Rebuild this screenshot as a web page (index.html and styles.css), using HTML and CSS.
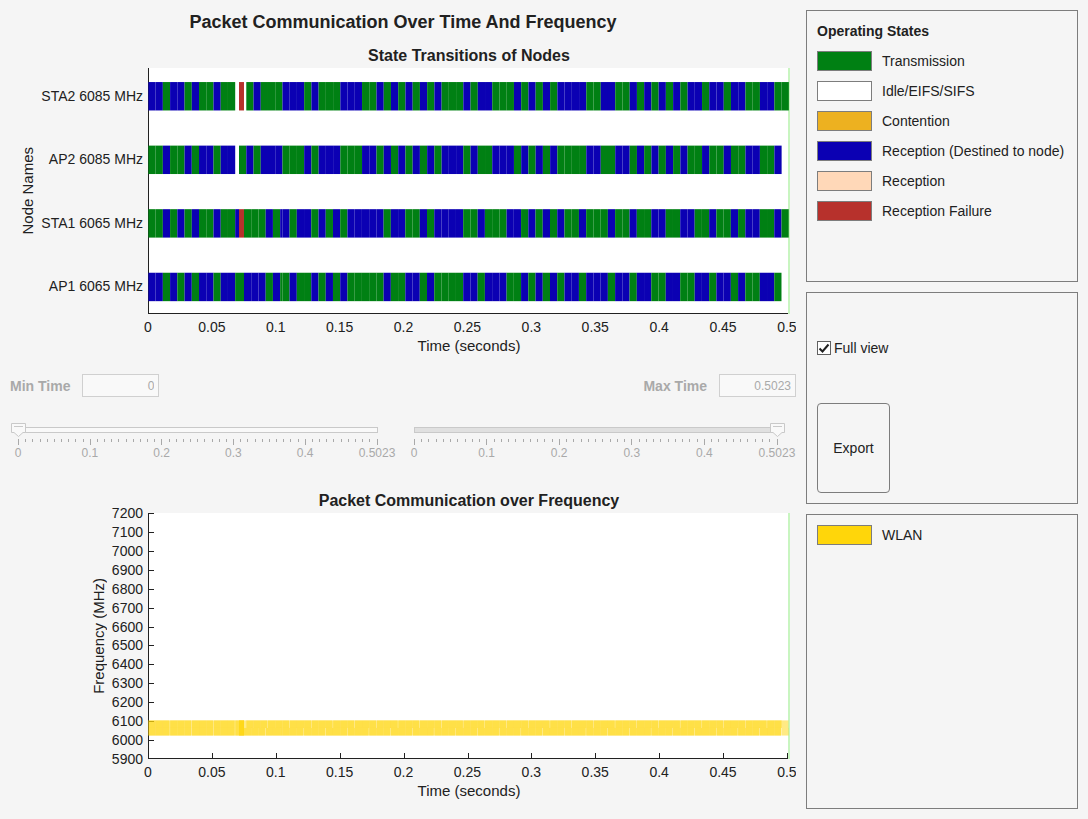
FILE: index.html
```
<!DOCTYPE html>
<html lang="en">
<head>
    <meta charset="UTF-8">
    <title>Packet Communication Over Time And Frequency</title>
    <link rel="stylesheet" href="styles.css">
</head>
<body>
    <main class="plots">
        <h1>Packet Communication Over Time And Frequency</h1>

        <section class="chart">
            <h2>State Transitions of Nodes</h2>
            <div class="y-axis">
                <span class="y-title">Node Names</span>
                <div class="y-labels nodes">
                    <span>STA2 6085 MHz</span>
                    <span>AP2 6085 MHz</span>
                    <span>STA1 6065 MHz</span>
                    <span>AP1 6065 MHz</span>
                </div>
            </div>
            <svg class="canvas" id="state-plot"></svg>
            <div class="x-labels" id="state-labels"></div>
            <div class="x-title">Time (seconds)</div>
        </section>

        <div class="limits">
            <label for="min-time">Min Time</label>
            <input class="limit" id="min-time" type="text" value="0" disabled>
            <label class="max-label" for="max-time">Max Time</label>
            <input class="limit" id="max-time" type="text" value="0.5023" disabled>
        </div>

        <div class="sliders">
            <div class="slider">
                <div class="track">
                    <input type="range" min="0" max="0.5023" step="0.0001" value="0" aria-label="Min time" disabled>
                </div>
                <svg class="ticks"></svg>
                <div class="slider-labels"><span>0</span><span>0.1</span><span>0.2</span><span>0.3</span><span>0.4</span><span>0.5023</span></div>
            </div>
            <div class="slider">
                <div class="track filled">
                    <input type="range" min="0" max="0.5023" step="0.0001" value="0.5023" aria-label="Max time" disabled>
                </div>
                <svg class="ticks"></svg>
                <div class="slider-labels"><span>0</span><span>0.1</span><span>0.2</span><span>0.3</span><span>0.4</span><span>0.5023</span></div>
            </div>
        </div>

        <section class="chart">
            <h2>Packet Communication over Frequency</h2>
            <div class="y-axis">
                <span class="y-title">Frequency (MHz)</span>
                <div class="y-labels freqs" id="freq-scale"></div>
            </div>
            <svg class="canvas" id="freq-plot"></svg>
            <div class="x-labels" id="freq-labels"></div>
            <div class="x-title">Time (seconds)</div>
        </section>
    </main>

    <aside class="side">
        <section class="panel">
            <h3>Operating States</h3>
            <ul class="legend">
                <li><span class="swatch transmission"></span>Transmission</li>
                <li><span class="swatch idle"></span>Idle/EIFS/SIFS</li>
                <li><span class="swatch contention"></span>Contention</li>
                <li><span class="swatch destined"></span>Reception (Destined to node)</li>
                <li><span class="swatch reception"></span>Reception</li>
                <li><span class="swatch failure"></span>Reception Failure</li>
            </ul>
        </section>
        <section class="panel actions">
            <label class="check"><input type="checkbox" checked>Full view</label>
            <button class="export" type="button">Export</button>
        </section>
        <section class="panel">
            <ul class="legend">
                <li><span class="swatch wlan"></span>WLAN</li>
            </ul>
        </section>
    </aside>

    <script src="plots.js"></script>
</body>
</html>
```
FILE: styles.css
```
* {
    box-sizing: border-box;
}
body {
    margin: 0;
    min-height: 100vh;
    padding: 10px;
    display: grid;
    grid-template-columns: 1fr 272px;
    gap: 10px;
    background: #f5f5f5;
    color: #212121;
    font-family: "Liberation Sans", Arial, sans-serif;
    font-size: 14px;
}
h1, h2, h3 {
    margin: 0;
    font-weight: bold;
}

/* plots */
.plots {
    display: flex;
    flex-direction: column;
    min-width: 0;
    padding-bottom: 8px;
}
h1 {
    margin-bottom: 10px;
    font-size: 18px;
    line-height: 24px;
    text-align: center;
}
.chart {
    flex: 1;
    display: grid;
    grid-template-columns: 138px 1fr;
    grid-template-rows: 24px minmax(200px, 1fr) auto auto;
    padding-right: 6px;
    overflow-x: clip;
}
.chart h2 {
    grid-column: 2;
    font-size: 16px;
    line-height: 24px;
    text-align: center;
}
.y-axis {
    display: flex;
    justify-content: flex-end;
    align-items: center;
    gap: 5px;
    padding-right: 5px;
}
.y-title {
    writing-mode: vertical-rl;
    transform: rotate(180deg);
    font-size: 15px;
    line-height: 16px;
    white-space: nowrap;
}
.y-labels {
    align-self: stretch;
    display: flex;
    flex-direction: column;
    justify-content: space-between;
    text-align: right;
    white-space: nowrap;
}
.nodes {
    padding: 18px 0;
    line-height: 20px;
}
.freqs {
    margin: -9px 0;
    line-height: 18px;
}
.canvas {
    display: block;
    width: 100%;
    height: 100%;
    background: #fff;
}
.axis {
    fill: #212121;
    shape-rendering: crispEdges;
}
.limit-line {
    fill: #c8f5c0;
}
.G { fill: #008013; }
.B { fill: #0b00b3; }
.R { fill: #b7312c; }
.band {
    fill: #ffd60a;
    fill-opacity: 0.5;
}
.x-labels {
    grid-column: 2;
    display: flex;
    justify-content: space-between;
    margin: 5px -17px 0 -20px;
    line-height: 16px;
}
.x-labels span {
    width: 40px;
    text-align: center;
}
.x-title {
    grid-column: 2;
    margin-top: 1px;
    font-size: 15px;
    line-height: 20px;
    text-align: center;
}

/* time limits */
.limits {
    display: flex;
    align-items: center;
    gap: 12px;
    margin-top: 18px;
    color: #a9a9a9;
    font-weight: bold;
}
.max-label {
    margin-left: auto;
}
.limit {
    width: 77px;
    height: 23px;
    padding: 0 4px;
    border: 1px solid #d0d0d0;
    background: #f9f9f9;
    color: #a9a9a9;
    font: 12px "Liberation Sans", Arial, sans-serif;
    text-align: right;
}
.sliders {
    display: grid;
    grid-template-columns: 90fr 91fr;
    gap: 36px;
    margin: 30px 0 29px;
    padding: 0 18px 0 8px;
    color: #a9a9a9;
}
.track {
    height: 6px;
    border: 1px solid #c9c9c9;
    background: #f9f9f9;
}
.track.filled {
    background: #e0e0e0;
}
.track input {
    display: block;
    appearance: none;
    width: calc(100% + 16px);
    height: 14px;
    margin: -5px -8px;
    background: none;
}
.track input::-webkit-slider-thumb {
    appearance: none;
    width: 15px;
    height: 14px;
    background: url("data:image/svg+xml,%3Csvg xmlns='http://www.w3.org/2000/svg' width='15' height='14'%3E%3Cpath d='M.5.5h14v9h-2.5l-4.5 4-4.5-4H.5z' fill='%23f9f9f9' stroke='%23c9c9c9'/%3E%3Cpath d='M3 3.5h9' stroke='%23c9c9c9'/%3E%3C/svg%3E");
}
.ticks {
    display: block;
    width: 100%;
    height: 6px;
    margin-top: 6px;
    overflow: visible;
}
.ticks rect {
    fill: #a9a9a9;
    shape-rendering: crispEdges;
}
.slider-labels {
    display: flex;
    justify-content: space-between;
    margin: 1px -19px 0 -20px;
    font-size: 12px;
    line-height: 14px;
}
.slider-labels span {
    width: 40px;
    text-align: center;
}

/* side panels */
.side {
    display: grid;
    grid-template-rows: 272fr 213fr 295fr;
    gap: 10px;
}
.panel {
    padding: 10px;
    border: 1px solid #7d7d7d;
}
.panel h3 {
    margin-bottom: 10px;
    font-size: 14px;
    line-height: 20px;
}
.legend {
    display: flex;
    flex-direction: column;
    gap: 10px;
    margin: 0;
    padding: 0;
    list-style: none;
}
.legend li {
    display: flex;
    align-items: center;
    gap: 10px;
    line-height: 20px;
}
.swatch {
    width: 55px;
    height: 20px;
    border: 1px solid #7d7d7d;
}
.transmission { background: #008013; }
.idle { background: #fff; }
.contention { background: #edb120; }
.destined { background: #0b00b3; }
.reception { background: #ffd8b8; }
.failure { background: #b7312c; }
.wlan { background: #ffd60a; }
.actions {
    display: flex;
    flex-direction: column;
    justify-content: space-between;
    align-items: flex-start;
    padding-top: 45px;
}
.check {
    display: flex;
    align-items: center;
    gap: 3px;
    line-height: 20px;
}
.check input {
    appearance: none;
    width: 14px;
    height: 14px;
    margin: 0;
    border: 1px solid #616161;
    background: #fff;
}
.check input:checked {
    background: #fff url("data:image/svg+xml,%3Csvg xmlns='http://www.w3.org/2000/svg' width='12' height='12'%3E%3Cpath d='M1.5 6.5l3 3 6-7' fill='none' stroke='%23212121' stroke-width='2'/%3E%3C/svg%3E") center no-repeat;
}
.export {
    width: 73px;
    height: 90px;
    padding: 0;
    border: 1px solid #7d7d7d;
    border-radius: 4px;
    background: #f5f5f5;
    color: #212121;
    font: 14px "Liberation Sans", Arial, sans-serif;
}
```
FILE: plots.js
```
const END = 0.5023;
const SLOT = 0.00566;

// G = transmission, B = reception (destined to node), R = reception failure.
// Each run is [start time, packets, packet length]
const seq6085 = 'GBGGGBBBGBGGGBBB' + 'GGBGBGBGBGBGGGBGBBGGGBGBGBGBBB' + 'BGGBBGGBGBGBGBGBBGBBGBBGGBBGG';
const seq6065 = 'GBGGBGBGBGGGGG' + 'BGGBBGBGGGGBBGBBBGGBGBGBGBB' + 'GBBBGBBGBBGGBBGGBBGBBGBGGBBG';

function swap(s) {
    return s.replace(/[GB]/g, c => c === 'G' ? 'B' : 'G');
}

const nodes = [
    { // STA2
        freq: 6085,
        runs: [[0.0003, 'BBGBBGBGGBGG', SLOT], [0.0712, 'R', 0.0039], [0.0769, seq6085, SLOT]]
    },
    { // AP2
        freq: 6085,
        runs: [[0.0003, 'GGBGGBGBBGBB', SLOT], [0.0712, 'G', 0.0057], [0.0769, swap(seq6085).slice(0, -1), SLOT]]
    },
    { // STA1
        freq: 6065,
        runs: [[0.0003, 'GGBGBGBGGBGG', SLOT], [0.0682, 'B', 0.003], [0.0712, 'R', 0.0039], [0.0751, 'GGGBG', SLOT],
            [0.1034, 'B', 0.0017], [0.1051, swap(seq6065) + 'G', SLOT]]
    },
    { // AP1
        freq: 6065,
        runs: [[0.0003, 'BBGBGBGBBGBB', SLOT], [0.0682, 'G', 0.0069], [0.0751, 'BBBGB', SLOT],
            [0.1034, 'G', 0.0017], [0.1051, seq6065, SLOT]]
    }
];

function rect(svg, cls, x, y, width, height) {
    const el = document.createElementNS('http://www.w3.org/2000/svg', 'rect');
    el.setAttribute('class', cls);
    el.setAttribute('x', x);
    el.setAttribute('y', y);
    el.setAttribute('width', width);
    el.setAttribute('height', height);
    svg.appendChild(el);
    return el;
}

function pct(part, whole) {
    return (part / whole * 100).toFixed(3) + '%';
}

function drawFrame(svg) {
    rect(svg, 'axis', 0, 0, 1, '100%');
    rect(svg, 'axis', 0, '100%', '100%', 1).style.transform = 'translateY(-1px)';
    rect(svg, 'limit-line', '100%', 0, 2, '100%').style.transform = 'translateX(-2px)';
}

function addLabels(id, values) {
    const box = document.getElementById(id);
    values.forEach(value => {
        const span = document.createElement('span');
        span.textContent = value;
        box.appendChild(span);
    });
}

// State transitions
const statePlot = document.getElementById('state-plot');
const ROWS = 3.87;
drawFrame(statePlot);
nodes.forEach((node, row) => {
    node.runs.forEach(([start, states, length]) => {
        [...states].forEach((state, i) => {
            rect(statePlot, state, pct(start + i * length, END), pct(row + 0.221, ROWS), pct(length, END), pct(0.447, ROWS));
        });
    });
});

// Frequency usage
const freqPlot = document.getElementById('freq-plot');
const FREQ_MAX = 7200;
const FREQ_SPAN = 1300;
const GUARD = 0.0003;

function drawBand(start, length, top, height) {
    rect(freqPlot, 'band', pct(start, END), pct(FREQ_MAX - top, FREQ_SPAN), pct(length, END), pct(height, FREQ_SPAN));
}

drawFrame(freqPlot);
for (let f = 5900; f <= FREQ_MAX; f += 100) {
    rect(freqPlot, 'axis', 0, pct(FREQ_MAX - f, FREQ_SPAN), 6, 1);
}
for (let i = 1; i <= 10; i++) {
    rect(freqPlot, 'axis', pct(i * 0.05, END), '100%', 1, 6).style.transform = 'translateY(-6px)';
}
nodes.forEach(node => {
    const top = node.freq === 6085 ? 6104 : 6064;
    node.runs.forEach(([start, states, length]) => {
        [...states].forEach((state, i) => {
            // short gap after every third packet
            const gap = i % 3 === 2 ? GUARD : 0;
            drawBand(start + i * length, length - gap, top, 40);
        });
    });
});
// overlapping packets around the collision
drawBand(0.0682, 0.003, 6104, 40);
drawBand(0.0682, 0.003, 6104, 40);
drawBand(0.0712, 0.0039, 6104, 80);
drawBand(0.0712, 0.0039, 6104, 80);

const times = ['0', '0.05', '0.1', '0.15', '0.2', '0.25', '0.3', '0.35', '0.4', '0.45', '0.5'];
addLabels('state-labels', times);
addLabels('freq-labels', times);
addLabels('freq-scale', Array.from({ length: 14 }, (_, i) => FREQ_MAX - i * 100));

// Slider ticks
document.querySelectorAll('.ticks').forEach(svg => {
    for (let i = 0; i <= 49; i++) {
        rect(svg, 'tick', pct(i * 0.01, END), 0, 1, i % 10 === 0 ? 6 : 3);
    }
    rect(svg, 'tick', '100%', 0, 1, 6).style.transform = 'translateX(-1px)';
});
```
